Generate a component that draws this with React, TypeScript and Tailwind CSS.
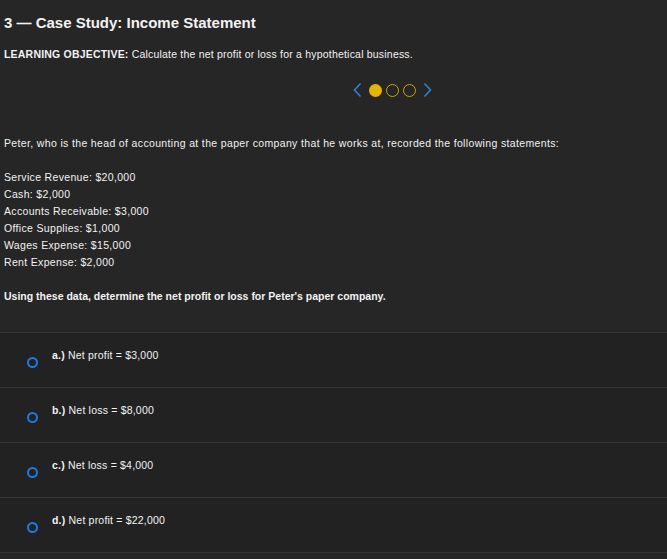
const statements = [
  "Service Revenue: $20,000",
  "Cash: $2,000",
  "Accounts Receivable: $3,000",
  "Office Supplies: $1,000",
  "Wages Expense: $15,000",
  "Rent Expense: $2,000",
];

const answers = [
  { key: "a.)", text: "Net profit = $3,000" },
  { key: "b.)", text: "Net loss = $8,000" },
  { key: "c.)", text: "Net loss = $4,000" },
  { key: "d.)", text: "Net profit = $22,000" },
];

function Chevron({ dir }: { dir: "left" | "right" }) {
  return (
    <svg width="9" height="16" viewBox="0 0 9 16" fill="none">
      <path
        d={dir === "left" ? "M7.5 1.5 L1.5 8 L7.5 14.5" : "M1.5 1.5 L7.5 8 L1.5 14.5"}
        stroke="#2f7fd8"
        strokeWidth="1.6"
      />
    </svg>
  );
}

export default function App() {
  return (
    <div
      className="min-h-[559px] w-[667px] bg-[#262626] text-[#f2f2f2]"
      style={{ fontFamily: "'Liberation Sans', Arial, sans-serif" }}
    >
      {/* Header */}
      <div className="px-[4px] pt-[12px]">
        <h1 className="text-[15px] font-bold leading-[22px]">
          3 — Case Study: Income Statement
        </h1>
        <p className="mt-[13px] text-[10.5px] font-medium leading-[14px] tracking-[0.2px]">
          <span className="font-bold">LEARNING OBJECTIVE:</span> Calculate the net profit or loss
          for a hypothetical business.
        </p>
      </div>

      {/* Carousel nav */}
      <div className="mt-[20px] flex h-[18px] items-center gap-[4px] pl-[353px]">
        <Chevron dir="left" />
        <div className="ml-[3px] h-[13px] w-[13px] rounded-full bg-[#e3b505]" />
        <div className="h-[13px] w-[13px] rounded-full border-[1.5px] border-[#c9a40a]" />
        <div className="h-[13px] w-[13px] rounded-full border-[1.5px] border-[#c9a40a]" />
        <div className="ml-[3px]">
          <Chevron dir="right" />
        </div>
      </div>

      {/* Body */}
      <div className="px-[4px] pt-[37px] text-[10.5px]">
        <p className="leading-[14px] tracking-[0.35px]">
          Peter, who is the head of accounting at the paper company that he works at, recorded the
          following statements:
        </p>
        <ul className="mt-[19px] tracking-[0.33px]">
          {statements.map((s) => (
            <li key={s} className="leading-[17px]">
              {s}
            </li>
          ))}
        </ul>
        <p className="mt-[18px] font-bold leading-[14px]">
          Using these data, determine the net profit or loss for Peter's paper company.
        </p>
      </div>

      {/* Answers */}
      <div className="mt-[29px] border-t border-[#353535]">
        {answers.map((a) => (
          <div
            key={a.key}
            className="flex h-[55px] items-start border-b border-[#353535] bg-[#222222] pl-[27px] pt-[15px]"
          >
            <div className="mt-[9px] h-[11px] w-[11px] rounded-full border-[2px] border-[#1f7ae0]" />
            <span className="ml-[14px] text-[10.5px] leading-[14px] tracking-[0.2px]">
              <span className="font-bold">{a.key}</span> {a.text}
            </span>
          </div>
        ))}
      </div>
    </div>
  );
}
